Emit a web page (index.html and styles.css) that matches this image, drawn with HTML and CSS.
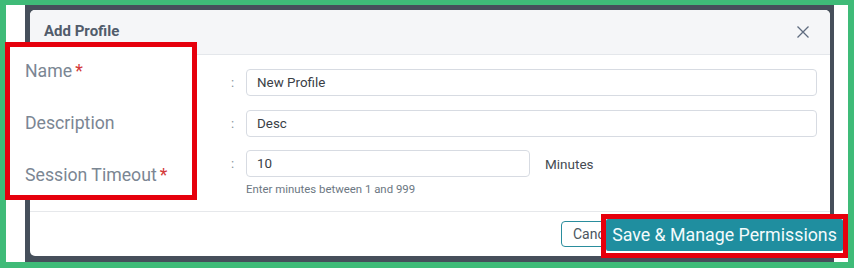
FILE: index.html
```html
<!DOCTYPE html>
<html>
<head>
<meta charset="utf-8">
<link rel="stylesheet" href="styles.css">
</head>
<body>
<div class="frame">
  <div class="backdrop">
    <div class="modal">
      <div class="modal-header">
        <span class="modal-title">Add Profile</span>
        <svg class="close" width="12" height="12" viewBox="0 0 12 12"><path d="M0.5 0.5 L11.5 11.5 M11.5 0.5 L0.5 11.5" stroke="#5f6c7f" stroke-width="1.3" fill="none"/></svg>
      </div>
      <div class="modal-body">
        <div class="row row-1">
          <span class="label"></span>
          <span class="colon">:</span>
          <div class="field"><div class="input">New Profile</div></div>
        </div>
        <div class="row row-2">
          <span class="label"></span>
          <span class="colon">:</span>
          <div class="field"><div class="input">Desc</div></div>
        </div>
        <div class="row row-3">
          <span class="label"></span>
          <span class="colon">:</span>
          <div class="field">
            <div class="inline">
              <div class="input input-short">10</div>
              <span class="unit">Minutes</span>
            </div>
            <div class="help">Enter minutes between 1 and 999</div>
          </div>
        </div>
      </div>
      <div class="modal-footer">
        <button class="btn btn-outline">Canc</button>
      </div>
    </div>
  </div>
</div>

<div class="callout callout-labels">
  <div class="callout-label">Name<span class="req">*</span></div>
  <div class="callout-label">Description</div>
  <div class="callout-label">Session Timeout<span class="req">*</span></div>
</div>

<div class="callout callout-save">
  <div class="save-btn">Save &amp; Manage Permissions</div>
</div>
</body>
</html>
```

FILE: styles.css
```css
* { box-sizing: border-box; }

html, body {
  margin: 0;
  padding: 0;
  background: #ffffff;
}

body {
  position: relative;
  width: 854px;
  height: 268px;
  overflow: hidden;
  font-family: Roboto, "Liberation Sans", sans-serif;
}

.frame {
  width: 854px;
  height: 268px;
  border-style: solid;
  border-color: #3fbb78;
  border-width: 5px 6px 6px 6px;
  background: #ffffff;
  display: flex;
}

.backdrop {
  flex: 1;
  margin: 0 14px 0 19px;
  background: #464f5b;
  padding: 5px 4px 6px 5px;
}

.modal {
  height: 246px;
  background: #ffffff;
  border-radius: 5px;
  overflow: hidden;
  display: flex;
  flex-direction: column;
}

.modal-header {
  height: 45px;
  background: #f5f6f8;
  border-bottom: 1px solid #e4e7eb;
  display: flex;
  align-items: center;
  justify-content: space-between;
  padding: 0 21px 2px 14px;
}

.modal-title {
  font-size: 15px;
  font-weight: 700;
  color: #515c6b;
}

.close { display: block; margin-top: 1px; }

.modal-body {
  padding: 14px 13px 15px 14px;
  border-bottom: 1px solid #e6e8eb;
}

.row {
  display: grid;
  grid-template-columns: 187px 15px 1fr;
  align-items: start;
}

.row-2 { margin-top: 14px; }
.row-3 { margin-top: 13px; }

.colon {
  color: #8a939c;
  font-size: 13px;
  line-height: 27px;
}

.input {
  height: 27px;
  border: 1px solid #d7dbe2;
  border-radius: 4px;
  padding: 0 10px;
  font-size: 13.4px;
  line-height: 25px;
  color: #3a4046;
}

.inline {
  display: flex;
  align-items: center;
  gap: 15px;
}

.input-short { width: 284px; }

.unit {
  font-size: 13.5px;
  color: #454c53;
}

.help {
  margin-top: 5px;
  font-size: 11.4px;
  line-height: 14px;
  color: #6c7782;
}

.modal-footer {
  flex: 1;
  display: flex;
  align-items: center;
  justify-content: flex-end;
  padding: 0 199px 1px 0;
}

.btn {
  height: 26px;
  border-radius: 4px;
  font-family: inherit;
  font-size: 14px;
  padding: 0 0 0 11px;
  text-align: left;
}

.btn-outline {
  width: 70px;
  background: #ffffff;
  border: 1px solid #2a8d9d;
  color: #4b5660;
}

/* annotation overlays */
.callout {
  position: absolute;
  border: 5px solid #e6000c;
  background: #ffffff;
}

.callout-labels {
  left: 5px;
  top: 42px;
  width: 192px;
  height: 158px;
  padding-left: 15px;
}

.callout-label {
  font-size: 17.7px;
  line-height: 48px;
  height: 48px;
  margin-bottom: 4px;
  color: #7b8693;
  white-space: nowrap;
}

.req {
  color: #d43a3a;
  margin-left: 3px;
}

.callout-save {
  left: 601px;
  top: 214px;
  width: 247px;
  height: 44px;
  padding-bottom: 2px;
}

.save-btn {
  height: 100%;
  background: #1f8e9f;
  border-radius: 2px;
  color: #f4fbfc;
  font-size: 17.8px;
  display: flex;
  align-items: center;
  justify-content: center;
  padding-bottom: 1px;
}
```
